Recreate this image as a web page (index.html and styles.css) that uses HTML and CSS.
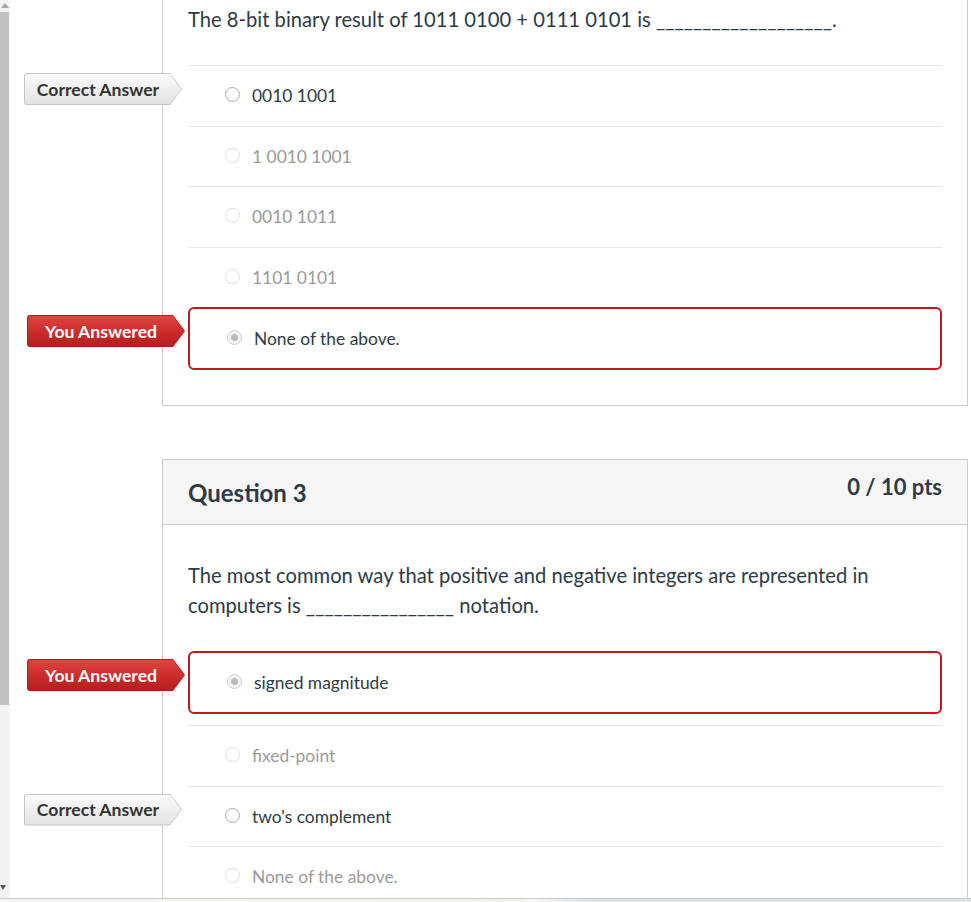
FILE: index.html
```html
<!DOCTYPE html>
<html lang="en">
<head>
<meta charset="utf-8">
<title>Quiz results</title>
<link rel="stylesheet" href="styles.css">
</head>
<body>
<div class="page">
  <div class="vscroll">
    <div class="sb-up"></div>
    <div class="sb-thumb"></div>
    <div class="sb-track"><div class="sb-down"></div></div>
  </div>
  <main class="quiz">
    <section class="question q2">
      <div class="q-body">
        <p class="q-text">The 8-bit binary result of 1011 0100 + 0111 0101 is ___________________.</p>
        <ul class="answers">
          <li class="answer correct">
            <span class="badge badge-correct"><span class="badge-in">Correct Answer</span></span>
            <span class="radio radio-on"></span><span class="a-text">0010 1001</span>
          </li>
          <li class="answer muted"><span class="radio"></span><span class="a-text">1 0010 1001</span></li>
          <li class="answer muted"><span class="radio"></span><span class="a-text">0010 1011</span></li>
          <li class="answer muted"><span class="radio"></span><span class="a-text">1101 0101</span></li>
          <li class="answer wrong">
            <span class="badge badge-wrong"><span class="badge-in">You Answered</span></span>
            <span class="radio radio-sel"></span><span class="a-text">None of the above.</span>
          </li>
        </ul>
      </div>
    </section>

    <section class="question q3">
      <header class="q-head">
        <h2 class="q-title">Question 3</h2>
        <span class="q-pts">0 / 10 pts</span>
      </header>
      <div class="q-body">
        <p class="q-text">The most common way that positive and negative integers are represented in computers is ________________ notation.</p>
        <ul class="answers">
          <li class="answer wrong">
            <span class="badge badge-wrong"><span class="badge-in">You Answered</span></span>
            <span class="radio radio-sel"></span><span class="a-text">signed magnitude</span>
          </li>
          <li class="answer muted after-wrong"><span class="radio"></span><span class="a-text">fixed-point</span></li>
          <li class="answer correct">
            <span class="badge badge-correct"><span class="badge-in">Correct Answer</span></span>
            <span class="radio radio-on"></span><span class="a-text">two's complement</span>
          </li>
          <li class="answer muted"><span class="radio"></span><span class="a-text">None of the above.</span></li>
        </ul>
      </div>
    </section>
  </main>
  <div class="hscroll"></div>
</div>
</body>
</html>
```

FILE: styles.css
```css
* { box-sizing: border-box; }
html, body { margin: 0; padding: 0; background: #fff; }
body {
  font-family: Lato, "Open Sans", "Liberation Sans", sans-serif;
  color: #2d3b45;
}
.page {
  width: 971px;
  height: 902px;
  overflow: hidden;
  display: grid;
  grid-template-columns: 10px 1fr;
  grid-template-rows: 898px 4px;
}
.vscroll {
  grid-row: 1;
  grid-column: 1;
  display: flex;
  flex-direction: column;
  background: #f1f1f1;
  border-right: 1px solid #f7f7f7;
}
.sb-up {
  height: 12px;
  background: #f1f1f1;
  position: relative;
}
.sb-up::after {
  content: "";
  position: absolute;
  left: 1px; top: 3px;
  border-left: 4px solid transparent;
  border-right: 4px solid transparent;
  border-bottom: 5px solid #a3a3a3;
}
.sb-thumb {
  height: 693px;
  width: 9px;
  background: #c1c1c1;
}
.sb-track {
  flex: 1;
  display: flex;
  flex-direction: column;
  justify-content: flex-end;
  padding-bottom: 8px;
}
.sb-down {
  width: 0; height: 0;
  border-left: 3px solid transparent;
  border-right: 3px solid transparent;
  border-top: 5px solid #555;
}
.hscroll {
  grid-row: 2;
  grid-column: 1 / span 2;
  border-top: 1px solid #c9c9c9;
  background: linear-gradient(90deg, #f3f3f3 0, #f3f3f3 155px, #f5f6f1 155px, #eef0ea 520px, #f7f7f7 530px, #dfe2e6 590px, #dfe2e6 100%);
}
.quiz {
  grid-row: 1;
  grid-column: 2;
  padding: 0 3px 0 152px;
  margin-top: -32px;
  min-width: 0;
}
.question {
  border: 1px solid #c7cdd1;
  background: #fff;
}
.q2 { margin-bottom: 53px; }
.q-head {
  display: flex;
  justify-content: space-between;
  align-items: flex-start;
  height: 65px;
  padding: 12px 25px 0;
  background: #f5f5f5;
  border-bottom: 1px solid #c7cdd1;
}
.q-title {
  margin: 6px 0 0;
  font-size: 24px;
  line-height: 30px;
  font-weight: 700;
  color: #2d3b45;
}
.q-pts {
  font-size: 22px;
  line-height: 30px;
  font-weight: 700;
  color: #2d3b45;
}
.q-body {
  padding: 35px 25px 35px;
}
.q-text {
  margin: 0;
  font-size: 20.2px;
  line-height: 30px;
  color: #2d3b45;
}
.answers {
  list-style: none;
  margin: 31px 0 0;
  padding: 0;
}
.answer {
  position: relative;
  display: flex;
  align-items: center;
  height: 60.5px;
  padding-left: 37px;
  border-top: 1px solid #e6e6e6;
  font-size: 17.4px;
  color: #2d3b45;
}
.answer.muted { color: #9a9a9a; }
.answer.wrong {
  height: 63px;
  border: 2px solid #c4161c;
  border-radius: 6px;
}
.answer.after-wrong { margin-top: 11px; }
.radio {
  width: 15px;
  height: 15px;
  border-radius: 50%;
  border: 1px solid #dedede;
  background: #fff;
  margin-right: 12px;
  flex: none;
  position: relative;
  top: -1px;
}
.radio-on { border-color: #a9a9a9; }
.radio-sel {
  border-color: #cfcfcf;
  background: #f2f2f2;
}
.radio-sel::after {
  content: "";
  position: absolute;
  left: 3px; top: 3px;
  width: 7px; height: 7px;
  border-radius: 50%;
  background: #b9b9b9;
}
.badge {
  position: absolute;
  left: -164px;
  top: 7px;
  width: 158px;
  height: 32px;
  padding: 1px;
  clip-path: polygon(0 0, 146px 0, 158px 50%, 146px 100%, 0 100%);
  border-radius: 3px 0 0 3px;
}
.wrong .badge { left: -163px; top: 6px; }
.badge-in {
  display: flex;
  align-items: center;
  justify-content: center;
  height: 100%;
  padding-right: 10px;
  clip-path: polygon(0 0, 145px 0, 156px 50%, 145px 100%, 0 100%);
  border-radius: 2px 0 0 2px;
  font-size: 17.6px;
  font-weight: 700;
  white-space: nowrap;
}
.badge-correct { background: #c5c5c5; }
.badge-correct .badge-in {
  background: linear-gradient(#fbfbfb, #ececec 60%, #e2e2e2);
  color: #333;
}
.badge-wrong { background: #b11a1a; }
.badge-wrong .badge-in {
  background: linear-gradient(#e0453f, #cc2b2b 55%, #b31f1f);
  color: #fff;
}
```
